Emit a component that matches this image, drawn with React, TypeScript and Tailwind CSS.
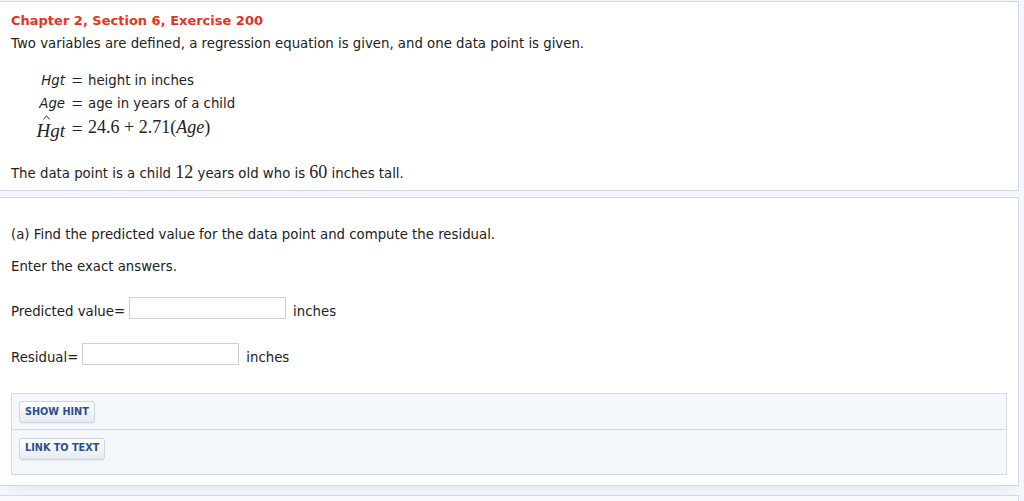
import React from 'react';

const sans = { fontFamily: '"DejaVu Sans", Verdana, sans-serif' };

// Math pieces are set in a serif face, like the typeset formulas
function M({ children, italic }: { children: React.ReactNode; italic?: boolean }) {
  return (
    <span className={`font-['Liberation_Serif',serif] text-[18px] leading-[16px] ${italic ? 'italic' : ''}`}>{children}</span>
  );
}

function VarRow({ label, children, hat }: { label: string; children: React.ReactNode; hat?: boolean }) {
  return (
    <div className="flex items-center h-[23px]">
      <div className="w-[57px] text-right pr-[3px]">
        {hat ? (
          <span className="relative inline-block font-['Liberation_Serif',serif] italic text-[19px] leading-none translate-y-[3px]">
            <svg className="absolute left-[6px] -top-[6px]" width="7" height="5" viewBox="0 0 7 5">
              <path d="M0.5 4.5 L3.5 0.8 L6.5 4.5" fill="none" stroke="#222" strokeWidth="0.9" />
            </svg>
            {label}
          </span>
        ) : (
          <span className="italic">{label}</span>
        )}
      </div>
      <div className="w-[18px] text-center text-[19px] leading-none font-['Liberation_Serif',serif]">=</div>
      <div className="pl-[2px]">{children}</div>
    </div>
  );
}

function HintButton({ children }: { children: React.ReactNode }) {
  return (
    <button className="h-[22px] px-[5px] rounded-[3px] border border-[#cdd4dd] bg-gradient-to-b from-white to-[#e7ebf0] text-[9.7px] font-bold text-[#2c4f8e] shadow-[0_1px_0_rgba(0,0,0,0.04)]">
      {children}
    </button>
  );
}

function AnswerInput({ width }: { width: string }) {
  return <input type="text" className={`${width} h-[22px] border border-[#cfcfcf] bg-white outline-none`} />;
}

export default function App() {
  return (
    <div style={sans} className="min-h-screen bg-[#f3f6fa] pt-px pr-[5px] text-[13.3px] text-[#222]">
      {/* problem statement */}
      <section className="bg-white border border-l-0 border-[#d3d9e2] pl-[11px] pt-[11px] pb-[8px]">
        <h2 className="text-[13px] font-bold text-[#e8321c] leading-[16px]">Chapter 2, Section 6, Exercise 200</h2>
        <p className="mt-[7px] leading-[16px]">
          Two variables are defined, a regression equation is given, and one data point is given.
        </p>
        <div className="mt-[17px]">
          <VarRow label="Hgt">height in inches</VarRow>
          <VarRow label="Age">age in years of a child</VarRow>
          <div className="h-[27px] flex items-center">
            <VarRow label="Hgt" hat>
              <M>24.6 + 2.71(</M>
              <M italic>Age</M>
              <M>)</M>
            </VarRow>
          </div>
        </div>
        <p className="mt-[22px] leading-[16px]">
          The data point is a child <M>12</M> years old who is <M>60</M> inches tall.
        </p>
      </section>

      {/* part (a) */}
      <section className="mt-[6px] bg-white border border-l-0 border-[#d3d9e2] pl-[11px] pr-[11px] pt-[29px] pb-[10px] shadow-[0_8px_14px_-10px_rgba(0,0,0,0.12)]">
        <p className="leading-[16px]">(a) Find the predicted value for the data point and compute the residual.</p>
        <p className="mt-[16px] leading-[16px]">Enter the exact answers.</p>

        <div className="mt-[22px] flex items-end gap-[7px]">
          <span className="-mr-[3px] leading-[16px] relative top-[1px]">Predicted value=</span>
          <AnswerInput width="w-[157px]" />
          <span className="leading-[16px] relative top-[1px]">inches</span>
        </div>
        <div className="mt-[24px] flex items-end gap-[7px]">
          <span className="-mr-[3px] leading-[16px] relative top-[1px]">Residual=</span>
          <AnswerInput width="w-[157px]" />
          <span className="leading-[16px] relative top-[1px]">inches</span>
        </div>

        <div className="mt-[28px] border border-[#d3dae3] bg-[#f4f7fb]">
          <div className="px-[7px] pt-[7px] pb-[6px] border-b border-[#d3dae3]">
            <HintButton>SHOW HINT</HintButton>
          </div>
          <div className="px-[7px] pt-[7px] pb-[14px]">
            <HintButton>LINK TO TEXT</HintButton>
          </div>
        </div>
      </section>

      {/* next part, cut off at the bottom */}
      <section className="mt-[9px] h-[40px] bg-[#f9fafc] border border-l-0 border-[#d3d9e2]" />
    </div>
  );
}
